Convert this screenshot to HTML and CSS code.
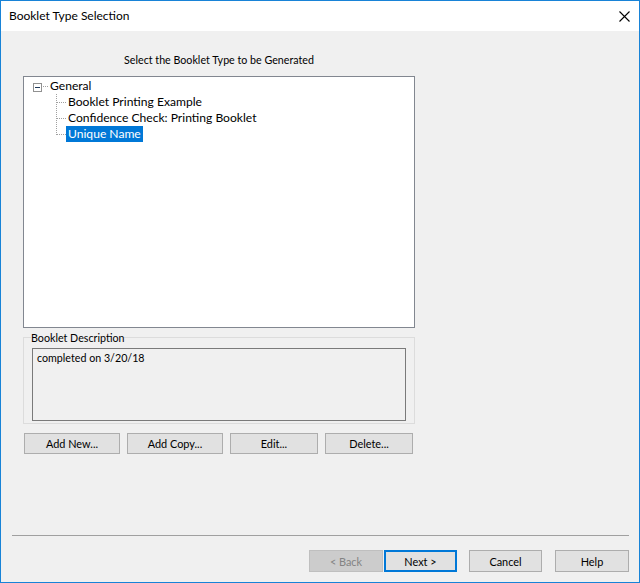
FILE: index.html
```html
<!DOCTYPE html>
<html>
<head>
<meta charset="utf-8">
<link rel="stylesheet" href="styles.css">
</head>
<body>
<div class="window">
  <div class="titlebar">
    <span class="title">Booklet Type Selection</span>
    <svg class="close" width="11" height="11" viewBox="0 0 11 11"><path d="M0.5 0.5 L10.5 10.5 M10.5 0.5 L0.5 10.5" stroke="#000" stroke-width="1.1" fill="none"/></svg>
  </div>
  <div class="content">
    <div class="panel">
      <div class="heading">Select the Booklet Type to be Generated</div>
      <div class="tree">
        <div class="row">
          <span class="root-indent"></span>
          <svg class="expander" width="9" height="9" viewBox="0 0 9 9"><rect x="0.5" y="0.5" width="8" height="8" fill="#fff" stroke="#919191"/><path d="M2 4.5 H7" stroke="#1e395b"/></svg>
          <svg class="root-dots" width="6" height="16" viewBox="0 0 6 16"><path d="M1 8.5 H6" stroke="#a0a0a0" stroke-dasharray="1 1"/></svg>
          <span class="label">General</span>
        </div>
        <div class="row">
          <span class="child-indent"></span>
          <svg class="conn" width="10" height="16" viewBox="0 0 10 16"><path d="M0.5 0 V16 M1 8.5 H10" stroke="#a0a0a0" stroke-dasharray="1 1"/></svg>
          <span class="label">Booklet Printing Example</span>
        </div>
        <div class="row">
          <span class="child-indent"></span>
          <svg class="conn" width="10" height="16" viewBox="0 0 10 16"><path d="M0.5 0 V16 M1 8.5 H10" stroke="#a0a0a0" stroke-dasharray="1 1"/></svg>
          <span class="label">Confidence Check: Printing Booklet</span>
        </div>
        <div class="row">
          <span class="child-indent"></span>
          <svg class="conn" width="10" height="16" viewBox="0 0 10 16"><path d="M0.5 0 V9 M1 8.5 H10" stroke="#a0a0a0" stroke-dasharray="1 1"/></svg>
          <span class="label selected">Unique Name</span>
        </div>
      </div>
      <fieldset class="group">
        <legend>Booklet Description</legend>
        <div class="desc">completed on 3/20/18</div>
      </fieldset>
      <div class="actions">
        <button class="btn w96">Add New...</button>
        <button class="btn w96">Add Copy...</button>
        <button class="btn w88">Edit...</button>
        <button class="btn w88">Delete...</button>
      </div>
    </div>
    <div class="footer">
      <div class="sep"></div>
      <div class="nav">
        <button class="btn nav-btn back" disabled>&lt; Back</button>
        <button class="btn nav-btn next">Next &gt;</button>
        <button class="btn nav-btn cancel">Cancel</button>
        <button class="btn nav-btn help">Help</button>
      </div>
    </div>
  </div>
</div>
</body>
</html>
```
FILE: styles.css
```css
html, body {
  margin: 0;
  padding: 0;
}
body {
  width: 640px;
  height: 583px;
  font-family: Lato, "Liberation Sans", sans-serif;
  font-size: 10.7px;
  color: #000;
  background: #f0f0f0;
}
.window {
  box-sizing: border-box;
  width: 640px;
  height: 583px;
  border: 1px solid #1883d7;
  display: flex;
  flex-direction: column;
  background: #f0f0f0;
}
.titlebar {
  height: 30px;
  flex: none;
  background: #fff;
  display: flex;
  align-items: center;
  justify-content: space-between;
  padding: 0 9px 0 8px;
}
.title {
  font-size: 12px;
  line-height: 16px;
}
.close {
  display: block;
}
.content {
  flex: 1;
  display: flex;
  flex-direction: column;
}
.panel {
  margin-left: 22px;
  width: 392px;
  display: flex;
  flex-direction: column;
}
.heading {
  margin-top: 21px;
  line-height: 16px;
  text-align: center;
}
.tree {
  margin-top: 8px;
  box-sizing: border-box;
  height: 252px;
  border: 1px solid #828790;
  background: #fff;
  padding-top: 1px;
  font-size: 12.1px;
}
.row {
  display: flex;
  height: 16px;
  align-items: flex-start;
}
.root-indent {
  width: 9px;
  flex: none;
}
.expander {
  display: block;
  margin-top: 5px;
  flex: none;
}
.root-dots {
  display: block;
  flex: none;
}
.child-indent {
  width: 32px;
  flex: none;
}
.conn {
  display: block;
  flex: none;
}
.label {
  line-height: 16px;
  padding: 0 2px;
  white-space: nowrap;
}
.selected {
  background: #0078d7;
  color: #fff;
}
.group {
  margin: 3px 0 0 0;
  padding: 4px 8px 2px 8px;
  border: 1px solid #dcdcdc;
  min-width: 0;
}
.group legend {
  padding: 0;
  margin-left: -1px;
  line-height: 13px;
}
.desc {
  box-sizing: border-box;
  height: 73px;
  border: 1px solid #7a7a7a;
  padding: 2px 4px;
  line-height: 14px;
}
.actions {
  display: flex;
  gap: 7px;
  margin-top: 9px;
  margin-left: 1px;
}
.btn {
  box-sizing: border-box;
  height: 21px;
  padding: 0;
  margin: 0;
  border: 1px solid #adadad;
  background: #e1e1e1;
  font-family: inherit;
  font-size: 10.9px;
  color: #000;
}
.w96 { width: 96px; }
.w88 { width: 88px; }
.footer {
  margin-top: auto;
  padding-bottom: 10px;
}
.sep {
  height: 1px;
  margin: 0 10px 0 11px;
  background: #a0a0a0;
}
.nav {
  display: flex;
  justify-content: flex-end;
  margin-top: 14px;
  padding-right: 10px;
}
.nav-btn {
  height: 22px;
  width: 73px;
}
.back {
  width: 74px;
  margin-right: 1px;
  background: #cccccc;
  border-color: #bfbfbf;
  color: #838383;
}
.next {
  border: 2px solid #0078d7;
  margin-right: 12px;
}
.cancel {
  margin-right: 13px;
}
.help {
  width: 74px;
}
```
